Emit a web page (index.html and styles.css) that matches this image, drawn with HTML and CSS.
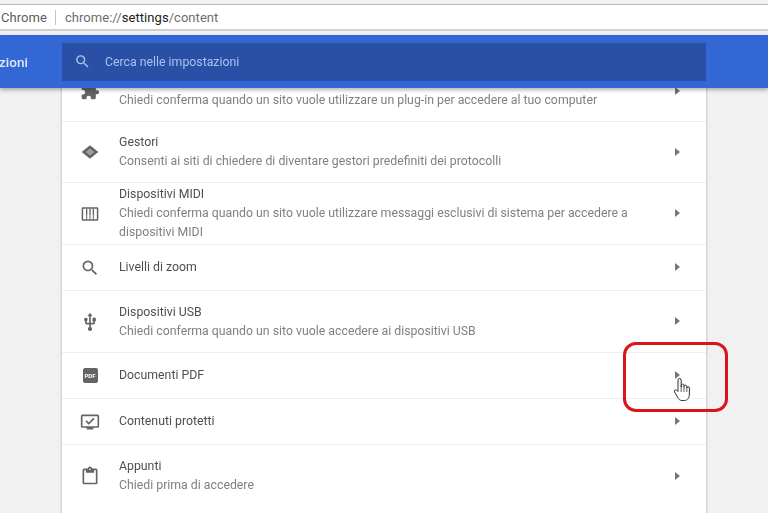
FILE: index.html
```html
<!DOCTYPE html>
<html lang="it">
<head>
<meta charset="utf-8">
<title>Impostazioni contenuti</title>
<link rel="stylesheet" href="styles.css">
</head>
<body>
<div class="page">
  <div class="addressbar">
    <span class="origin">Chrome</span>
    <span class="sep"></span>
    <span class="url">chrome://<b>settings</b>/content</span>
  </div>
  <header class="header">
    <div class="title">zioni</div>
    <div class="search">
      <svg class="search-icon" viewBox="0 0 24 24"><path d="M15.5 14h-.79l-.28-.27A6.47 6.47 0 0 0 16 9.5 6.5 6.5 0 1 0 9.5 16c1.61 0 3.09-.59 4.23-1.57l.27.28v.79l5 4.99L20.49 19l-4.99-5zm-6 0C7.01 14 5 11.99 5 9.5S7.01 5 9.5 5 14 7.01 14 9.5 11.99 14 9.5 14z"/></svg>
      <span>Cerca nelle impostazioni</span>
    </div>
  </header>
  <main class="main">
    <div class="card">
      <div class="row r61">
        <svg class="icon" viewBox="0 0 24 24"><path d="M20.5 11H19V7a2 2 0 0 0-2-2h-4V3.500a2.500 2.500 0 0 0-5 0V5H4a2 2 0 0 0-2 2v3.800h1.500a2.700 2.700 0 0 1 0 5.400H2V20a2 2 0 0 0 2 2h3.800v-1.500a2.700 2.700 0 0 1 5.400 0V22H17a2 2 0 0 0 2-2v-4h1.500a2.500 2.500 0 0 0 0-5z"/></svg>
        <div class="text"><div>Plug-in</div><div class="sub">Chiedi conferma quando un sito vuole utilizzare un plug-in per accedere al tuo computer</div></div>
        <span class="arrow"></span>
      </div>
      <div class="row r61">
        <svg class="icon" viewBox="0 0 24 24"><path fill-rule="evenodd" d="M12 4l10 8-10 8-10-8zM12 8.500 7.500 12l4.500 3.500 4.500-3.500z"/><path class="soft" d="M12 8.500 16.500 12 12 15.500 7.500 12z"/></svg>
        <div class="text"><div>Gestori</div><div class="sub">Consenti ai siti di chiedere di diventare gestori predefiniti dei protocolli</div></div>
        <span class="arrow"></span>
      </div>
      <div class="row r62">
        <svg class="icon" viewBox="0 0 24 24"><path fill-rule="evenodd" d="M3.500 4h17A1.500 1.500 0 0 1 22 5.500v13a1.500 1.500 0 0 1-1.500 1.500h-17A1.500 1.500 0 0 1 2 18.500v-13A1.500 1.500 0 0 1 3.500 4zM3.800 5.800v12.400h16.400V5.800z"/><path d="M7.200 5.800h1.600V13h-.2v5.500H7.400V13h-.2zM11.200 5.800h1.600V13h-.2v5.500h-1.200V13h-.2zM15.200 5.800h1.600V13h-.2v5.500h-1.200V13h-.2z"/></svg>
        <div class="text"><div>Dispositivi MIDI</div><div class="sub wrap">Chiedi conferma quando un sito vuole utilizzare messaggi esclusivi di sistema per accedere a dispositivi MIDI</div></div>
        <span class="arrow"></span>
      </div>
      <div class="row r46">
        <svg class="icon" viewBox="0 0 24 24"><path d="M15.500 14h-.79l-.28-.27A6.470 6.470 0 0 0 16 9.500 6.500 6.500 0 1 0 9.500 16c1.610 0 3.090-.59 4.230-1.570l.27.28v.79l5 4.990L20.490 19l-4.990-5zm-6 0C7.010 14 5 11.990 5 9.500S7.010 5 9.500 5 14 7.010 14 9.500 11.990 14 9.500 14z"/></svg>
        <div class="text"><div>Livelli di zoom</div></div>
        <span class="arrow"></span>
      </div>
      <div class="row r62">
        <svg class="icon" viewBox="0 0 24 24"><path d="M15 7v4h1v2h-3V5h2l-3-4-3 4h2v8H8v-2.070c.7-.37 1.200-1.080 1.200-1.930a2.200 2.200 0 0 0-4.400 0c0 .85.5 1.560 1.200 1.930V13a2 2 0 0 0 2 2h3v3.050a2.500 2.500 0 1 0 2 0V15h3a2 2 0 0 0 2-2v-2h1V7z"/></svg>
        <div class="text"><div>Dispositivi USB</div><div class="sub">Chiedi conferma quando un sito vuole accedere ai dispositivi USB</div></div>
        <span class="arrow"></span>
      </div>
      <div class="row r46">
        <span class="pdf">PDF</span>
        <div class="text"><div>Documenti PDF</div></div>
        <span class="arrow"></span>
      </div>
      <div class="row r46">
        <svg class="icon" viewBox="0 0 24 24"><path d="M21 3H3a2 2 0 0 0-2 2v12a2 2 0 0 0 2 2h5v2h8v-2h5a2 2 0 0 0 2-2V5a2 2 0 0 0-2-2zm0 14H3V5h18zm-5-10-5.500 5.500L8 10l-1.400 1.400 3.900 3.900 6.900-6.900z"/></svg>
        <div class="text"><div>Contenuti protetti</div></div>
        <span class="arrow"></span>
      </div>
      <div class="row r62 last">
        <svg class="icon" viewBox="0 0 24 24"><path d="M19 3h-4.180C14.400 1.840 13.300 1 12 1s-2.400.84-2.820 2H5a2 2 0 0 0-2 2v15a2 2 0 0 0 2 2h14a2 2 0 0 0 2-2V5a2 2 0 0 0-2-2zm-7 0a1 1 0 1 1 0 2 1 1 0 0 1 0-2zm7 17H5V5h2v3h10V5h2z"/></svg>
        <div class="text"><div>Appunti</div><div class="sub">Chiedi prima di accedere</div></div>
        <span class="arrow"></span>
      </div>
    </div>
  </main>
  <div class="highlight"></div>
  <svg class="cursor" viewBox="0 0 18 25"><path d="M5 12V3a1.600 1.600 0 0 1 3.200 0v7.500V8.500a1.400 1.400 0 0 1 2.800 0v2V9.500a1.400 1.400 0 0 1 2.800 0v1.500a1.300 1.300 0 0 1 2.600 0v6c0 3-1.500 6.500-5 6.500H9c-2.500 0-3.500-1.500-4.500-3.500L1.500 15c-.8-1.500 1-3 2.300-1.800L5 14.500z" fill="#fff" stroke="#333" stroke-width="1"/><path d="M8.200 11v4M11 11v4M13.800 11v4" stroke="#333" stroke-width=".8" fill="none"/></svg>
</div>
</body>
</html>
```

FILE: styles.css
```css
* { box-sizing: border-box; }
html, body { margin: 0; height: 100%; }
body { font-family: Roboto, "Liberation Sans", sans-serif; background: #f1f1f1; overflow: hidden; }
.page { position: relative; width: 768px; height: 513px; overflow: hidden; display: flex; flex-direction: column; padding-top: 4px; filter: blur(.35px); }
.addressbar { height: 27px; flex: none; background: #fff; border-top: 1px solid #b9b9b9; border-bottom: 2px solid #cfcfcf; display: flex; align-items: center; padding-left: 1px; font-size: 13px; letter-spacing: .05px; color: #6d6d6d; }
.origin { color: #5c5c5c; }
.sep { width: 1px; height: 15px; background: #c4c4c4; margin: 0 9px 0 8px; }
.url b { font-weight: 400; color: #222; }
.header { position: relative; z-index: 2; flex: none; margin-top: 4px; height: 53px; background: #3367d6; box-shadow: 0 2px 4px rgba(0,0,0,.3); display: flex; align-items: center; }
.title { width: 63px; margin-left: -1px; color: #dfe8fa; font-size: 13.500px; font-weight: 500; flex: none; }
.search { width: 644px; height: 38px; background: #2a50a6; display: flex; align-items: center; gap: 14px; padding-left: 12px; color: #a9c2f2; font-size: 12.300px; }
.search-icon { width: 17px; height: 17px; fill: #a9c2f2; }
.main { flex: 1; min-height: 0; padding-left: 62px; }
.card { width: 644px; margin-top: -27px; background: #fff; height: 500px; box-shadow: 0 0 2px 1px rgba(0,0,0,.16); }
.row { display: flex; align-items: center; border-bottom: 1px solid #efefef; padding-left: 18px; padding-right: 26px; font-size: 12.300px; line-height: 19px; color: #4f4f4f; }
.r61 { height: 61px; }
.r62 { height: 62px; }
.r46 { height: 46px; }
.last { border-bottom: 0; }
.icon { width: 20px; height: 20px; fill: #646464; flex: none; }
.icon .soft { fill: #9a9a9a; }
.pdf { width: 15px; height: 15px; margin: 0 2.500px; flex: none; border-radius: 2px; background: #646464; color: #fff; font-size: 6px; font-weight: 700; line-height: 15px; text-align: center; }
.text { flex: 1; margin-left: 19px; }
.sub { color: #808080; }
.wrap { width: 530px; }
.arrow { width: 0; height: 0; flex: none; margin-bottom: 1px; border-left: 5px solid #757575; border-top: 4px solid transparent; border-bottom: 4px solid transparent; }
.highlight { position: absolute; z-index: 3; left: 623px; top: 342px; width: 105px; height: 70px; border: 3px solid #d9141b; border-radius: 13px; }
.cursor { position: absolute; z-index: 4; left: 673px; top: 377px; width: 18px; height: 25px; }
```
